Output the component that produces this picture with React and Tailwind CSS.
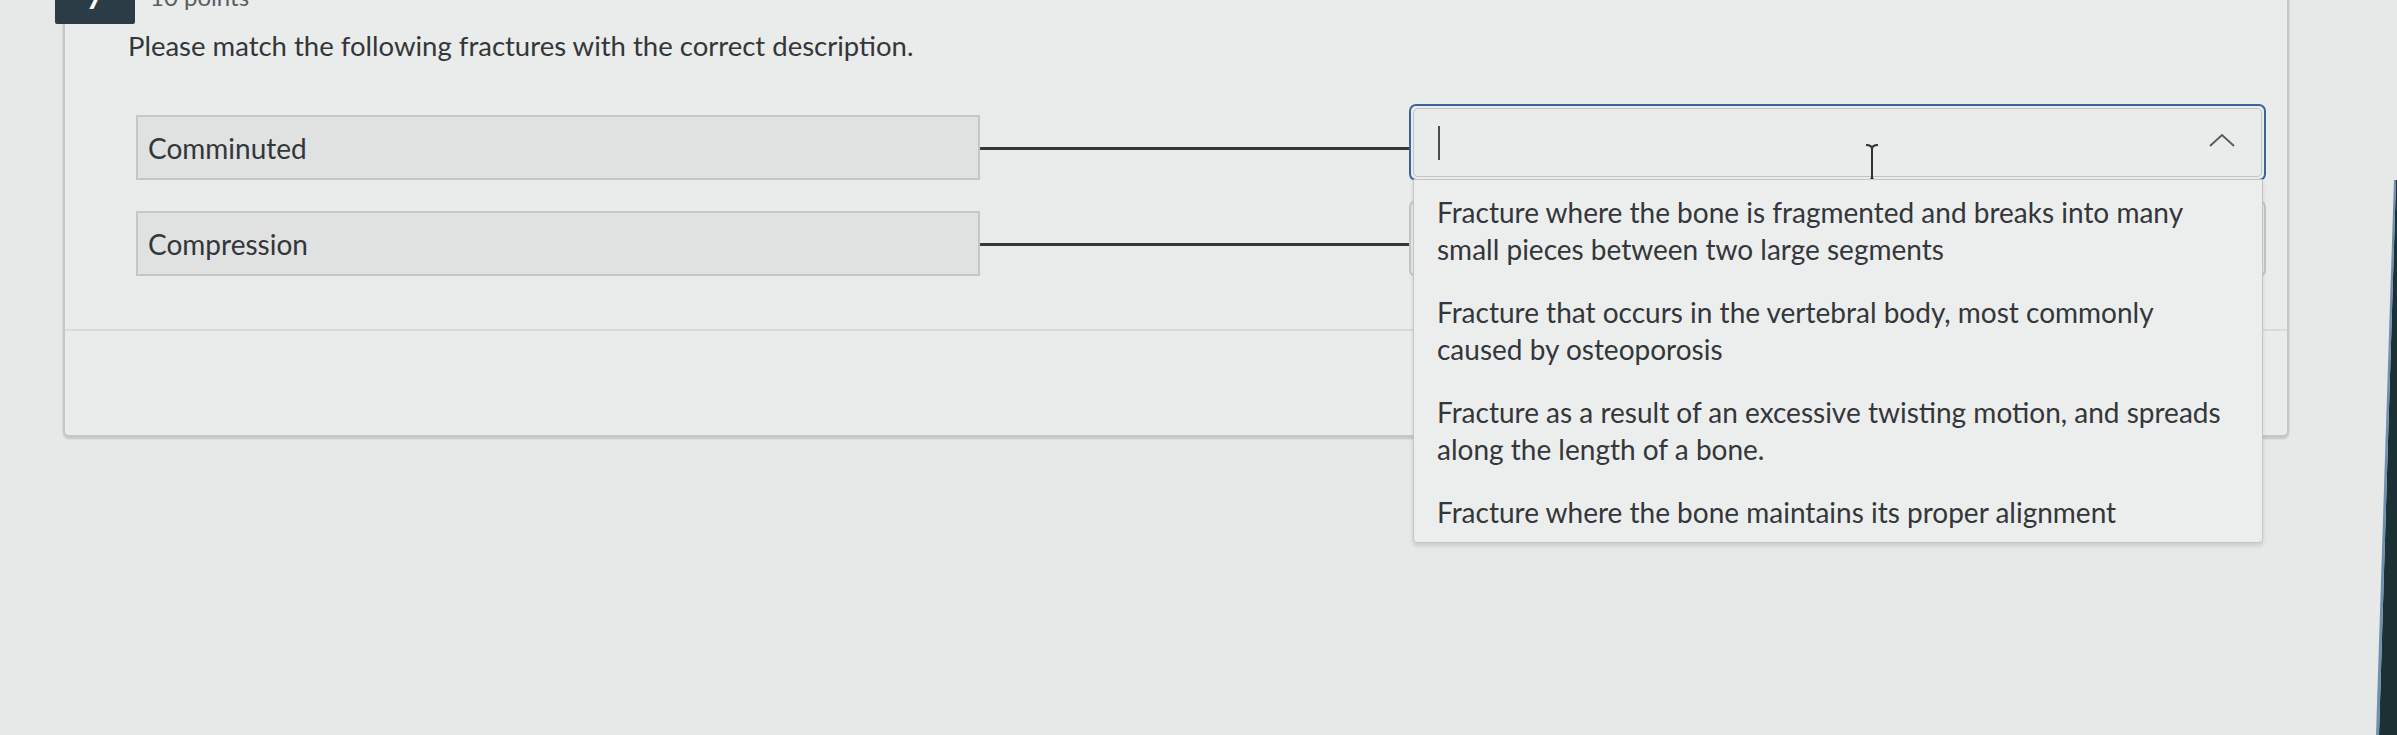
import React from "react";

const options = [
  ["Fracture where the bone is fragmented and breaks into many", "small pieces between two large segments"],
  ["Fracture that occurs in the vertebral body, most commonly", "caused by osteoporosis"],
  ["Fracture as a result of an excessive twisting motion, and spreads", "along the length of a bone."],
  ["Fracture where the bone maintains its proper alignment"],
];

function DropdownList() {
  return (
    <div className="absolute left-[2px] top-full z-10 flex w-[850px] flex-col gap-[26px] rounded-b-[4px] border border-[#c3c6c5] bg-[#eceeed] pb-[11px] pl-[23px] pt-[14px] shadow-[0_3px_4px_rgba(0,0,0,0.12)]">
      {options.map((lines, i) => (
        <div key={i} className="flex flex-col text-[28px] leading-[37px] text-[#33363a]">
          {lines.map((l, j) => (
            <span key={j} className="whitespace-nowrap">{l}</span>
          ))}
        </div>
      ))}
    </div>
  );
}

function Select({ open }) {
  return (
    <div
      className={
        open
          ? "relative h-[77px] w-[857px] rounded-[7px] border-2 border-[#3d629c] p-[2px]"
          : "relative h-[77px] w-[857px] rounded-[7px] border-2 border-[#c3c6c5] p-[2px]"
      }
    >
      <div className="flex h-full items-center rounded-[5px] border border-[#c2c4c3] bg-[#eaeceb] pl-[24px] pr-[26px]">
        {open && <div className="h-[34px] w-[2px] bg-[#4a4d50]" />}
        <div className="flex-1" />
        {open && (
          <svg width="26" height="14" viewBox="0 0 26 14" className="mb-[6px]">
            <polyline points="1,13 13,2 25,13" fill="none" stroke="#55595c" strokeWidth="1.8" />
          </svg>
        )}
      </div>
      {open && (
        <svg width="16" height="38" viewBox="0 0 16 38" className="absolute left-[453px] top-[38px]">
          <path d="M2 1 Q8 1 8 5 Q8 1 14 1 M8 5 V33 M2 37 Q8 37 8 33 Q8 37 14 37" fill="none" stroke="#2f3235" strokeWidth="2" />
        </svg>
      )}
      {open && <DropdownList />}
    </div>
  );
}

function MatchRow({ label, open }) {
  return (
    <div className="flex h-[77px] items-start pl-[71px]">
      <div className="mt-[11px] flex h-[65px] w-[844px] items-center border-2 border-[#c5c7c6] bg-[#e0e2e1] pl-[10px] text-[28px] text-[#33363a]">
        {label}
      </div>
      <div className="mt-[43px] h-[3px] w-[429px] bg-[#34383b]" />
      <Select open={open} />
    </div>
  );
}

export default function App() {
  return (
    <div className="relative flex h-[735px] w-[2397px] overflow-hidden bg-[#e7e9e8] font-['Lato','Open_Sans',sans-serif] text-[#33363a]">
      <div className="flex-1 pl-[63px]">
        <div className="relative -mt-[30px] h-[467px] w-[2226px] rounded-b-[6px] border-x-2 border-b-2 border-[#c4c7c6] bg-[#eaeceb] shadow-[0_2px_2px_rgba(0,0,0,0.15)]">
          {/* question number badge + points, cut off at the top edge */}
          <div className="absolute -left-[10px] top-0 flex h-[54px] w-[80px] items-end justify-center overflow-hidden rounded-b-[2px] bg-[#2c3c46] pb-[12px]">
            <span className="text-[30px] font-bold leading-[30px] text-white">7</span>
          </div>
          <div className="absolute left-[85px] top-[12px] text-[24px] leading-[30px] text-[#5a5e61]">10 points</div>

          <p className="pl-[63px] pt-[58px] text-[27.5px] leading-[36px]">
            Please match the following fractures with the correct description.
          </p>

          <div className="mt-[40px] flex flex-col gap-[19px]">
            <MatchRow label="Comminuted" open />
            <MatchRow label="Compression" />
          </div>

          <div className="mt-[52px] border-t-2 border-[#d9dbda]" />
        </div>
      </div>
      <svg width="22" height="735" viewBox="0 0 22 735" className="shrink-0">
        <polygon points="21,180 22,180 22,735 4,735" fill="#1b3134" />
        <polygon points="19,180 21,180 4,735 1,735" fill="#6d8fb0" />
      </svg>
    </div>
  );
}
